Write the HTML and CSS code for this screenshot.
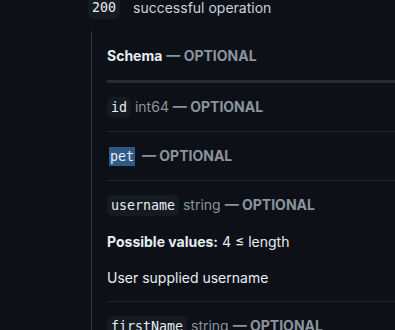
FILE: index.html
```html
<!DOCTYPE html>
<html>
<head>
<meta charset="utf-8">
<link rel="stylesheet" href="styles.css">
</head>
<body>
<div class="response">
  <div class="status-row">
    <code class="code">200</code>
    <span class="status-text">successful operation</span>
  </div>
  <div class="schema">
    <div class="schema-head"><span class="strong">Schema</span> <span class="opt">— OPTIONAL</span></div>
    <div class="props">
      <div class="prop">
        <div class="prop-title"><code class="code">id</code> <span class="type">int64</span> <span class="opt">— OPTIONAL</span></div>
      </div>
      <div class="prop">
        <div class="prop-title"><code class="code sel">pet</code> <span class="opt">— OPTIONAL</span></div>
      </div>
      <div class="prop">
        <div class="prop-title"><code class="code">username</code> <span class="type">string</span> <span class="opt">— OPTIONAL</span></div>
        <div class="prop-line"><span class="strong">Possible values:</span> 4 ≤ length</div>
        <div class="prop-line">User supplied username</div>
      </div>
      <div class="prop">
        <div class="prop-title"><code class="code">firstName</code> <span class="type">string</span> <span class="opt">— OPTIONAL</span></div>
      </div>
    </div>
  </div>
</div>
</body>
</html>
```
FILE: styles.css
```css
html, body {
  margin: 0;
  padding: 0;
  background: #0d1117;
}
body {
  font-family: Inter, "Noto Sans", sans-serif;
  font-size: 14px;
  color: #e6edf3;
  overflow: hidden;
}
.response {
  margin-top: -4px;
}
.status-row {
  display: flex;
  align-items: center;
  gap: 13px;
  padding-left: 88px;
  height: 22px;
}
.status-text {
  color: #c9d1d9;
}
.code {
  font-family: "DejaVu Sans Mono", monospace;
  font-size: 13.3px;
  background: #161b22;
  border-radius: 6px;
  padding: 3px 4px;
  color: #e6edf3;
  line-height: 17px;
}
.code.sel {
  background: #305a86;
  border-radius: 0;
  padding: 2px 1px;
  margin-left: 2px;
  margin-right: 3px;
}
.schema {
  margin-left: 91px;
  margin-top: 13px;
  border-left: 1px solid #30363d;
  padding-left: 15px;
  padding-top: 15px;
}
.schema-head {
  line-height: 20px;
  padding-bottom: 14px;
  border-bottom: 3px solid #262b33;
}
.strong {
  font-weight: 700;
  color: #e6edf3;
}
.opt {
  font-weight: 700;
  color: #8b949e;
}
.type {
  color: #8b949e;
}
.prop {
  padding: 12px 0;
  border-bottom: 1px solid #21262d;
}
.prop-title {
  line-height: 24px;
}
.prop-line {
  line-height: 22px;
  margin-top: 14px;
}
```
